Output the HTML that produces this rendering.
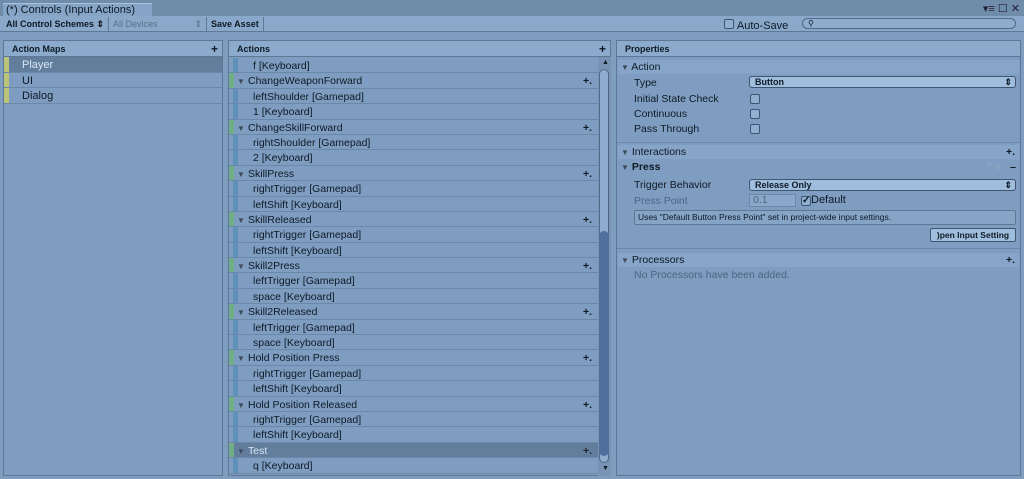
<!DOCTYPE html>
<html><head><style>
*{box-sizing:border-box;margin:0;padding:0}
body{width:1024px;height:479px;background:#7f9dbf;font-family:"Liberation Sans",sans-serif;font-size:10.5px;color:#0e1a26;position:relative;overflow:hidden}
.a{position:absolute}
.tab{left:3px;top:3px;width:149px;height:13px;background:#86a4c6;border-top:1px solid #a7c2de;padding-left:3px;font-size:11px;line-height:12px}
.bar{left:0;top:16px;width:1024px;height:16px;background:#8aa8c9;border-bottom:1px solid #5f7a97}
.panel{background:#7f9dc0;border:1px solid #5d7795}
.hdr{height:16px;background:#8cabcc;border-bottom:1px solid #5d7795;font-weight:bold;font-size:9px;line-height:16px;padding-left:8px;position:relative}
.row{height:15.4px;line-height:17px;border-bottom:1px solid #6b88a8;position:relative;white-space:nowrap;overflow:hidden}
.bind{padding-left:24px}
.bind:before{content:"";position:absolute;left:4px;top:0;width:5px;height:100%;background:#5f90b8}
.act{padding-left:19px}
.act:before{content:"";position:absolute;left:0;top:0;width:5px;height:100%;background:#6fae86}
.act .tri{position:absolute;left:8px;top:0;font-size:8px;color:#3d4b5a}
.plus{position:absolute;right:6px;top:0;font-weight:bold}
.map:before{background:#b9c47a}
.cb{display:inline-block;width:10px;height:10px;border:1px solid #3f5570;border-radius:2px;background:#8fb0d2}
.drop{background:#9fbddc;border:1px solid #3f5570;border-radius:3px;height:12px;font-size:9px;line-height:10px;padding-left:5px;font-weight:bold}
</style></head><body>
<div class="a" style="left:0;top:0;width:1024px;height:16px;background:#6f8cab"></div>
<div class="a tab">(*) Controls (Input Actions)</div>
<div class="a" style="right:4px;top:2px;font-size:11px;color:#223">▾≡ ☐ ✕</div>
<div class="a bar"></div>
<div class="a" style="left:6px;top:17px;font-size:9px;line-height:14px;font-weight:bold">All Control Schemes ⇕</div>
<div class="a" style="left:108px;top:17px;height:14px;border-left:1px solid #5f7a97;font-size:9px;line-height:14px;color:#5a6f86;padding-left:4px;width:97px">All Devices<span style="float:right;padding-right:3px">⇕</span></div>
<div class="a" style="left:206px;top:17px;height:14px;border-left:1px solid #5f7a97;border-right:1px solid #5f7a97;font-size:9px;line-height:14px;font-weight:bold;padding:0 4px">Save Asset</div>
<div class="a" style="left:724px;top:19px"><span class="cb"></span> <span style="font-size:11px">Auto-Save</span></div>
<div class="a" style="left:802px;top:18px;width:214px;height:11px;border:1px solid #4f6886;border-radius:6px;background:#8eaccd;font-size:8px;padding-left:5px;line-height:9px">⚲</div>

<div class="a panel" style="left:3px;top:40px;width:220px;height:436px">
<div class="hdr">Action Maps<span class="plus" style="top:0;right:4px;font-size:12px">+</span></div>
<div class="row act map" style="background:#637e9c;color:#d8e6f5;padding-left:18px;height:16px;font-size:11px">Player</div>
<div class="row act map" style="padding-left:18px;font-size:11px">UI</div>
<div class="row act map" style="padding-left:18px;font-size:11px">Dialog</div>
</div>

<div class="a panel" style="left:228px;top:40px;width:383px;height:436px">
<div class="hdr">Actions<span class="plus" style="right:4px;font-size:12px">+</span></div>
<div style="width:369px;padding-top:1px">
<div class="row bind">f [Keyboard]</div>
<div class="row act"><span class="tri">▼</span>ChangeWeaponForward<span class="plus">+.</span></div>
<div class="row bind">leftShoulder [Gamepad]</div>
<div class="row bind">1 [Keyboard]</div>
<div class="row act"><span class="tri">▼</span>ChangeSkillForward<span class="plus">+.</span></div>
<div class="row bind">rightShoulder [Gamepad]</div>
<div class="row bind">2 [Keyboard]</div>
<div class="row act"><span class="tri">▼</span>SkillPress<span class="plus">+.</span></div>
<div class="row bind">rightTrigger [Gamepad]</div>
<div class="row bind">leftShift [Keyboard]</div>
<div class="row act"><span class="tri">▼</span>SkillReleased<span class="plus">+.</span></div>
<div class="row bind">rightTrigger [Gamepad]</div>
<div class="row bind">leftShift [Keyboard]</div>
<div class="row act"><span class="tri">▼</span>Skill2Press<span class="plus">+.</span></div>
<div class="row bind">leftTrigger [Gamepad]</div>
<div class="row bind">space [Keyboard]</div>
<div class="row act"><span class="tri">▼</span>Skill2Released<span class="plus">+.</span></div>
<div class="row bind">leftTrigger [Gamepad]</div>
<div class="row bind">space [Keyboard]</div>
<div class="row act"><span class="tri">▼</span>Hold Position Press<span class="plus">+.</span></div>
<div class="row bind">rightTrigger [Gamepad]</div>
<div class="row bind">leftShift [Keyboard]</div>
<div class="row act"><span class="tri">▼</span>Hold Position Released<span class="plus">+.</span></div>
<div class="row bind">rightTrigger [Gamepad]</div>
<div class="row bind">leftShift [Keyboard]</div>
<div class="row act" style="background:#637e9c;color:#d8e6f5"><span class="tri">▼</span>Test<span class="plus" style="color:#223">+.</span></div>
<div class="row bind">q [Keyboard]</div>
</div>
<div class="a" style="left:369px;top:16px;width:13px;height:419px;background:#7893b3"></div>
<div class="a" style="left:373px;top:18px;font-size:7px">▲</div>
<div class="a" style="left:373px;top:424px;font-size:7px">▼</div>
<div class="a" style="left:370px;top:28px;width:10px;height:394px;border:1px solid #4f6886;border-radius:5px;background:#8eaccd"></div>
<div class="a" style="left:370px;top:190px;width:10px;height:225px;border-radius:5px;background:#4f6f9c"></div>
</div>

<div class="a panel" style="left:616px;top:40px;width:405px;height:436px;font-size:10.5px">
<div class="hdr">Properties</div>
<div class="a" style="left:1px;top:19px;width:401px;height:14px;background:#87a5c8;padding-left:3px;line-height:15px"><span style="font-size:8px;color:#3d4b5a">▼</span> Action</div>
<div class="a" style="left:17px;top:36px">Type</div>
<div class="a drop" style="left:132px;top:35px;width:267px">Button<span style="float:right;padding-right:3px">⇕</span></div>
<div class="a" style="left:17px;top:52px">Initial State Check</div><span class="a cb" style="left:133px;top:53px"></span>
<div class="a" style="left:17px;top:67px">Continuous</div><span class="a cb" style="left:133px;top:68px"></span>
<div class="a" style="left:17px;top:82px">Pass Through</div><span class="a cb" style="left:133px;top:83px"></span>
<div class="a" style="left:0;top:101px;width:403px;border-top:1px solid #6b88a8"></div>
<div class="a" style="left:1px;top:104px;width:401px;height:14px;background:#87a5c8;padding-left:3px;line-height:15px"><span style="font-size:8px;color:#3d4b5a">▼</span> Interactions<span class="plus" style="right:4px">+.</span></div>
<div class="a" style="left:4px;top:120px;font-weight:bold;width:395px"><span style="font-size:8px;color:#3d4b5a">▼</span> Press<span class="a" style="right:0;top:0">– </span><span class="a" style="right:16px;color:#98abbf;font-weight:normal">^ v</span></div>
<div class="a" style="left:17px;top:138px">Trigger Behavior</div>
<div class="a drop" style="left:132px;top:138px;width:267px">Release Only<span style="float:right;padding-right:3px">⇕</span></div>
<div class="a" style="left:17px;top:154px;color:#4d6480">Press Point</div>
<div class="a" style="left:132px;top:153px;width:47px;height:13px;border:1px solid #6b88a8;background:#8aa8ca;color:#4d6480;padding-left:3px;line-height:11px">0.1</div>
<div class="a" style="left:184px;top:153px;font-size:11px"><span class="cb" style="text-align:center;line-height:8px;font-size:10px;font-weight:bold">✓</span>Default</div>
<div class="a" style="left:17px;top:169px;width:382px;height:15px;border:1px solid #5d7795;border-radius:2px;background:#86a4c6;font-size:8.5px;line-height:13px;padding-left:3px">Uses "Default Button Press Point" set in project-wide input settings.</div>
<div class="a" style="left:313px;top:187px;width:86px;height:14px;border:1px solid #3f5570;border-radius:2px;background:#9fbddc;font-size:8.5px;font-weight:bold;line-height:12px;text-align:center">)pen Input Setting</div>
<div class="a" style="left:0;top:207px;width:403px;border-top:1px solid #6b88a8"></div>
<div class="a" style="left:1px;top:212px;width:401px;height:14px;background:#87a5c8;padding-left:3px;line-height:15px"><span style="font-size:8px;color:#3d4b5a">▼</span> Processors<span class="plus" style="right:4px">+.</span></div>
<div class="a" style="left:17px;top:228px;color:#4d6480">No Processors have been added.</div>
</div>
</body></html>
